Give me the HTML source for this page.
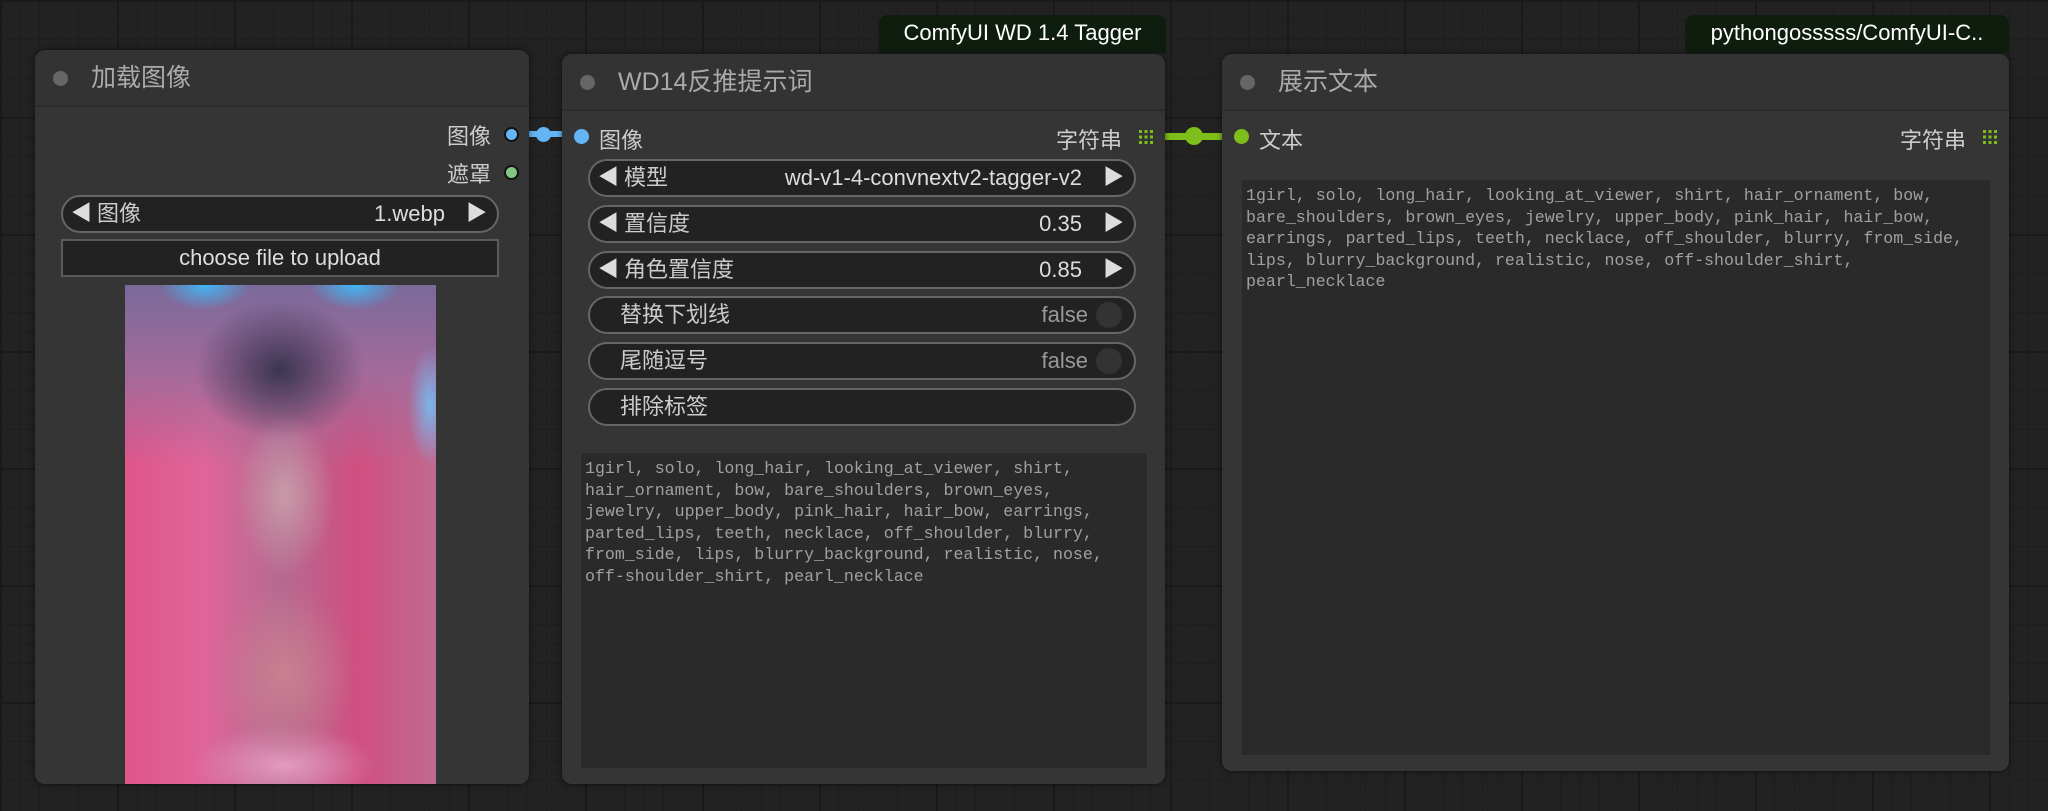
<!DOCTYPE html>
<html><head><meta charset="utf-8"><style>
*{box-sizing:border-box;margin:0;padding:0}
body{width:2048px;height:811px;overflow:hidden;background:#222;
background-image:linear-gradient(90deg,#1a1a1a 2px,transparent 2px),linear-gradient(#1a1a1a 2px,transparent 2px),linear-gradient(90deg,#1d1d1d 1px,transparent 1px),linear-gradient(#1d1d1d 1px,transparent 1px);
background-size:117px 117px,117px 117px,19.5px 19.5px,19.5px 19.5px;
font-family:"Liberation Sans","Noto Sans CJK SC",sans-serif;position:relative}
.abs{position:absolute}
.node{position:absolute;background:#353535;border-radius:10px;box-shadow:0 0 6px rgba(0,0,0,.6)}
.title{position:absolute;left:0;right:0;top:0;height:57px;background:#333;border-bottom:2px solid #2b2b2b;border-radius:10px 10px 0 0;color:#aaa;font-size:25px;line-height:57px;padding-left:56px}
.title:before{content:"";position:absolute;left:18px;top:21px;width:15px;height:15px;border-radius:50%;background:#666}
.lbl{position:absolute;color:#ccc;font-size:22px}
.w{position:absolute;height:38px;background:#222;border:2px solid #666;border-radius:19px;color:#ccc;font-size:22px;line-height:34px}
.w .l{position:absolute;left:34px}
.w .v{position:absolute;right:52px;color:#ddd}
.w .al{position:absolute;left:8px;top:0;font-size:21px;color:#ddd}
.w .ar{position:absolute;right:10px;top:0;font-size:21px;color:#ddd}
.w .t{position:absolute;left:30px}
.w .f{position:absolute;right:46px;color:#999}
.w .k{position:absolute;right:12px;top:4px;width:26px;height:26px;border-radius:50%;background:#333}
.ta{position:absolute;background:#2a2a2a;color:#a0a0a0;font-family:"Liberation Mono","Noto Sans CJK SC",monospace;font-size:16.6px;line-height:21.5px;padding:5px 4px;white-space:pre}
.dot{position:absolute;border-radius:50%}
.badge{position:absolute;background:#0f1d0f;color:#fff;font-size:22px;border-radius:9px 9px 0 0;height:38px;line-height:36px;text-align:center}
</style></head><body>

<div class="badge" style="left:879px;top:15px;width:287px">ComfyUI WD 1.4 Tagger</div>
<div class="badge" style="left:1685px;top:15px;width:324px">pythongosssss/ComfyUI-C..</div>

<div class="abs" style="left:529px;top:131px;width:33px;height:6px;background:#64b5f6"></div>
<div class="dot" style="left:536px;top:127px;width:15px;height:15px;background:#64b5f6"></div>
<div class="abs" style="left:1165px;top:133px;width:57px;height:7px;background:#7dbe1a"></div>
<div class="dot" style="left:1185px;top:127px;width:18px;height:18px;background:#7dbe1a"></div>

<div class="node" style="left:35px;top:50px;width:494px;height:734px;overflow:hidden">
  <div class="title">加载图像</div>
  <div class="lbl" style="right:38px;top:69px">图像</div>
  <div class="dot" style="right:10px;top:77px;width:15px;height:15px;background:#64b5f6;border:2px solid #111"></div>
  <div class="lbl" style="right:38px;top:107px">遮罩</div>
  <div class="dot" style="right:10px;top:115px;width:15px;height:15px;background:#81c784;border:2px solid #111"></div>
  <div class="w" style="left:26px;top:145px;width:438px"><span class="al">◀</span><span class="l">图像</span><span class="v">1.webp</span><span class="ar">▶</span></div>
  <div class="abs" style="left:26px;top:189px;width:438px;height:38px;background:#222;border:2px solid #5a5a5a;color:#ddd;font-size:22px;line-height:34px;text-align:center">choose file to upload</div>
  <div class="abs" style="left:90px;top:235px;width:311px;height:500px;background:
    radial-gradient(ellipse 45px 25px at 80px 0px,rgba(60,190,255,.9),transparent),
    radial-gradient(ellipse 45px 25px at 230px 0px,rgba(60,190,255,.9),transparent),
    radial-gradient(ellipse 22px 60px at 305px 120px,rgba(110,200,255,.8),transparent),
    radial-gradient(ellipse 55px 90px at 160px 210px,#c79aa8,transparent 90%),
    radial-gradient(ellipse 85px 70px at 155px 85px,#3a3552,transparent),
    radial-gradient(ellipse 70px 90px at 160px 390px,#c88090,transparent),
    radial-gradient(ellipse 90px 40px at 160px 480px,#e49ac0,transparent),
    linear-gradient(#7a6a9a 0,#a46a9a 90px,transparent 180px),
    linear-gradient(90deg,#e0558a,#e06598 25%,#b56a90 50%,#d04f80 75%,#c06a90);"></div>
</div>

<div class="node" style="left:562px;top:54px;width:603px;height:730px">
  <div class="title">WD14反推提示词</div>
  <div class="dot" style="left:12px;top:75px;width:15px;height:15px;background:#64b5f6"></div>
  <div class="lbl" style="left:37px;top:69px">图像</div>
  <div class="lbl" style="right:43px;top:69px">字符串</div>
  <div class="abs" style="right:12px;top:76px;width:14px;height:14px;background:
   repeating-linear-gradient(90deg,#7dbe1a 0 3px,transparent 3px 5.5px);-webkit-mask:repeating-linear-gradient(#000 0 3px,transparent 3px 5.5px)"></div>
  <div class="w" style="left:26px;top:105px;width:548px"><span class="al">◀</span><span class="l">模型</span><span class="v">wd-v1-4-convnextv2-tagger-v2</span><span class="ar">▶</span></div>
  <div class="w" style="left:26px;top:151px;width:548px"><span class="al">◀</span><span class="l">置信度</span><span class="v">0.35</span><span class="ar">▶</span></div>
  <div class="w" style="left:26px;top:197px;width:548px"><span class="al">◀</span><span class="l">角色置信度</span><span class="v">0.85</span><span class="ar">▶</span></div>
  <div class="w" style="left:26px;top:242px;width:548px"><span class="t">替换下划线</span><span class="f">false</span><span class="k"></span></div>
  <div class="w" style="left:26px;top:288px;width:548px"><span class="t">尾随逗号</span><span class="f">false</span><span class="k"></span></div>
  <div class="w" style="left:26px;top:334px;width:548px"><span class="t">排除标签</span></div>
  <div class="ta" style="left:19px;top:399px;width:566px;height:315px">1girl, solo, long_hair, looking_at_viewer, shirt,
hair_ornament, bow, bare_shoulders, brown_eyes,
jewelry, upper_body, pink_hair, hair_bow, earrings,
parted_lips, teeth, necklace, off_shoulder, blurry,
from_side, lips, blurry_background, realistic, nose,
off-shoulder_shirt, pearl_necklace</div>
</div>

<div class="node" style="left:1222px;top:54px;width:787px;height:717px">
  <div class="title">展示文本</div>
  <div class="dot" style="left:12px;top:75px;width:15px;height:15px;background:#7dbe1a"></div>
  <div class="lbl" style="left:37px;top:69px">文本</div>
  <div class="lbl" style="right:43px;top:69px">字符串</div>
  <div class="abs" style="right:12px;top:76px;width:14px;height:14px;background:
   repeating-linear-gradient(90deg,#7dbe1a 0 3px,transparent 3px 5.5px);-webkit-mask:repeating-linear-gradient(#000 0 3px,transparent 3px 5.5px)"></div>
  <div class="ta" style="left:20px;top:126px;width:748px;height:575px">1girl, solo, long_hair, looking_at_viewer, shirt, hair_ornament, bow,
bare_shoulders, brown_eyes, jewelry, upper_body, pink_hair, hair_bow,
earrings, parted_lips, teeth, necklace, off_shoulder, blurry, from_side,
lips, blurry_background, realistic, nose, off-shoulder_shirt,
pearl_necklace</div>
</div>
</body></html>
